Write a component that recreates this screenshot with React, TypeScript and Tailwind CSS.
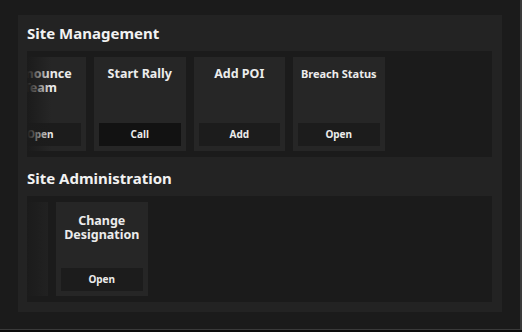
import React from "react";

type Card = { title: string; action: string; small?: boolean; dark?: boolean; ghost?: boolean };

const row1: Card[] = [
  { title: "Announce Team", action: "Open" },
  { title: "Start Rally", action: "Call", dark: true },
  { title: "Add POI", action: "Add" },
  { title: "Breach Status", action: "Open", small: true },
];

const row2: Card[] = [
  { title: "", action: "", ghost: true },
  { title: "Change Designation", action: "Open" },
];

function ActionCard({ c, top }: { c: Card; top: "a" | "b" }) {
  if (c.ghost) {
    return <div className="w-[91.5px] h-[94px] shrink-0 bg-[#222222]" />;
  }
  return (
    <div
      className={
        top === "a"
          ? "w-[91.5px] h-[94px] shrink-0 bg-[#262626] flex flex-col items-center justify-between pt-[10px] pb-[5px] px-[5px]"
          : "w-[91.5px] h-[94px] shrink-0 bg-[#262626] flex flex-col items-center justify-between pt-[12px] pb-[5px] px-[5px]"
      }
    >
      <div
        className={
          c.small
            ? "text-[11px] leading-[14px] font-bold text-[#ececec] text-center"
            : "text-[12.5px] leading-[13.5px] font-bold text-[#ececec] text-center"
        }
      >
        {c.title}
      </div>
      <div
        className={
          c.dark
            ? "w-full h-[23px] bg-[#121212] flex items-center justify-center text-[10px] font-bold text-[#ececec]"
            : "w-full h-[23px] bg-[#1c1c1c] flex items-center justify-center text-[10px] font-bold text-[#ececec]"
        }
      >
        {c.action}
      </div>
    </div>
  );
}

function Row({ cards, offset }: { cards: Card[]; offset: "a" | "b" }) {
  return (
    <div className="relative h-[106px] bg-[#1b1b1b] overflow-hidden">
      <div
        className={
          offset === "a"
            ? "flex gap-[8px] pt-[6px] ml-[-32.5px]"
            : "flex gap-[8px] pt-[6px] ml-[-70.5px]"
        }
      >
        {cards.map((c, i) => (
          <ActionCard key={i} c={c} top={offset} />
        ))}
      </div>
      <div className="absolute left-0 top-0 h-full w-[24px] bg-gradient-to-r from-[#1b1b1b] to-transparent" />
    </div>
  );
}

export default function App() {
  return (
    <div
      className="w-[522px] h-[332px] bg-[#0c0c0c] overflow-hidden"
      style={{ fontFamily: '"Noto Sans", "Open Sans", sans-serif' }}
    >
      <div className="w-[522px] h-[330px] bg-[#1b1b1b] border-r-2 border-b border-[#3a3a3a] pl-[18px] pt-[15px]">
        <div className="w-[484px] h-[297px] bg-[#232323] pl-[9px] pr-[10px] flex flex-col">
          <div className="h-[36px] flex items-center text-[15px] font-bold text-[#f2f2f2] pt-[1px]">
            Site Management
          </div>
          <Row cards={row1} offset="a" />
          <div className="h-[39px] flex items-center text-[15px] font-bold text-[#f2f2f2] pt-[3px]">
            Site Administration
          </div>
          <Row cards={row2} offset="b" />
        </div>
      </div>
    </div>
  );
}
